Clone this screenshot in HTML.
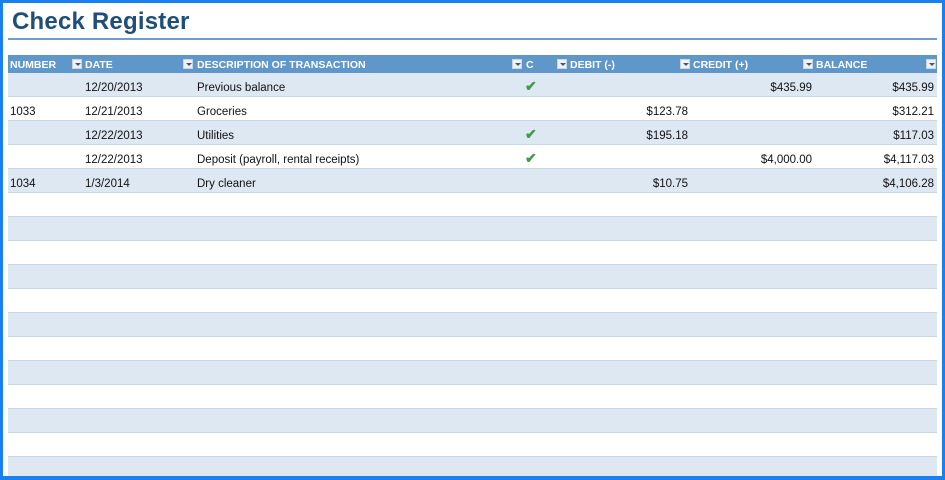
<!DOCTYPE html><html><head><style>
body{margin:0;width:945px;height:479px;overflow:hidden;background:#fff;font-family:"Liberation Sans",sans-serif;}
.frame{position:absolute;left:0;top:0;width:939px;height:473px;border:3px solid #1a80f0;border-right-width:4px;border-bottom-width:4px;}
.title{position:absolute;left:12px;top:8px;font-size:24px;font-weight:bold;color:#1f4e79;letter-spacing:0.2px}
.rule{position:absolute;left:8px;top:38px;width:929px;height:2px;background:#6f9cc8}
.hdr{position:absolute;left:8px;top:55px;width:929px;height:18px;background:#5f97ca;color:#fff;font-size:10.5px;font-weight:bold}
.hdr span{position:absolute;top:4px}
.fb{position:absolute;top:4px;width:10px;height:10px;background:#eef2f6;border:1px solid #c9d6e2;box-sizing:border-box}
.fb:after{content:"";position:absolute;left:2px;top:3px;border-left:3px solid transparent;border-right:3px solid transparent;border-top:3px solid #555}
.row{position:absolute;left:8px;width:929px;height:23px;border-bottom:1px solid #c5d6e6;font-size:11.5px;color:#111}
.b{background:#dde8f3}
.row span{position:absolute;top:9px}
.row span.ck{position:absolute;left:517px;top:5px;color:#3f9a4a;font-size:14px;font-weight:bold}
</style></head><body>
<div class="title">Check Register</div>
<div class="rule"></div>
<div class="hdr">
<span style="left:2px">NUMBER</span><div class="fb" style="left:64px"></div>
<span style="left:77px">DATE</span><div class="fb" style="left:175px"></div>
<span style="left:189px">DESCRIPTION OF TRANSACTION</span><div class="fb" style="left:504px"></div>
<span style="left:518px">C</span><div class="fb" style="left:549px"></div>
<span style="left:562px">DEBIT (-)</span><div class="fb" style="left:672px"></div>
<span style="left:685px">CREDIT (+)</span><div class="fb" style="left:795px"></div>
<span style="left:808px">BALANCE</span><div class="fb" style="left:918px"></div>
</div>
<div class="row b" style="top:73px"><span style="left:77px">12/20/2013</span><span style="left:189px">Previous balance</span><span class="ck">✔</span><span style="right:125px">$435.99</span><span style="right:3px">$435.99</span></div>
<div class="row" style="top:97px"><span style="left:2px">1033</span><span style="left:77px">12/21/2013</span><span style="left:189px">Groceries</span><span style="right:249px">$123.78</span><span style="right:3px">$312.21</span></div>
<div class="row b" style="top:121px"><span style="left:77px">12/22/2013</span><span style="left:189px">Utilities</span><span class="ck">✔</span><span style="right:249px">$195.18</span><span style="right:3px">$117.03</span></div>
<div class="row" style="top:145px"><span style="left:77px">12/22/2013</span><span style="left:189px">Deposit (payroll, rental receipts)</span><span class="ck">✔</span><span style="right:125px">$4,000.00</span><span style="right:3px">$4,117.03</span></div>
<div class="row b" style="top:169px"><span style="left:2px">1034</span><span style="left:77px">1/3/2014</span><span style="left:189px">Dry cleaner</span><span style="right:249px">$10.75</span><span style="right:3px">$4,106.28</span></div>
<div class="row" style="top:193px"></div>
<div class="row b" style="top:217px"></div>
<div class="row" style="top:241px"></div>
<div class="row b" style="top:265px"></div>
<div class="row" style="top:289px"></div>
<div class="row b" style="top:313px"></div>
<div class="row" style="top:337px"></div>
<div class="row b" style="top:361px"></div>
<div class="row" style="top:385px"></div>
<div class="row b" style="top:409px"></div>
<div class="row" style="top:433px"></div>
<div class="row b" style="top:457px;height:19px"></div>
<div class="frame"></div>
</body></html>
